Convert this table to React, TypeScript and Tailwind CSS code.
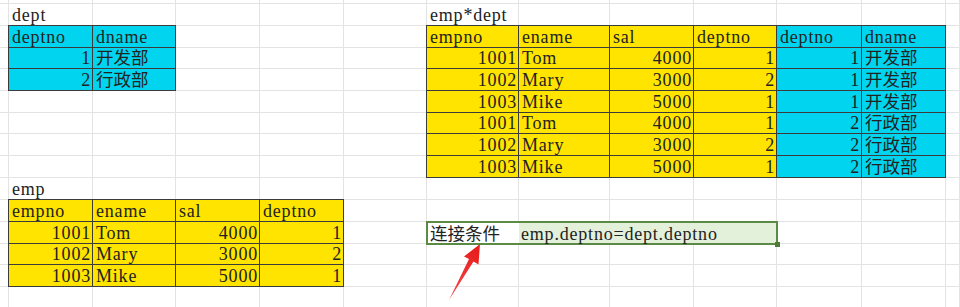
import React from "react";

type Fill = "y" | "c";
type Cell = { text: string; fill?: Fill; right?: boolean };

// sheet coordinates: row 0 is y 4-26, col 0 is x 9-93
const cells = new Map<string, Cell>();
const put = (r: number, c: number, cell: Cell) => cells.set(`${r},${c}`, cell);

const putTable = (r0: number, c0: number, rows: (string | number)[][], fills: Fill[]) => {
  rows.forEach((row, i) =>
    row.forEach((v, j) =>
      put(r0 + i, c0 + j, {
        text: String(v),
        fill: fills[j],
        right: i > 0 && typeof v === "number",
      })
    )
  );
};

put(0, 0, { text: "dept" });
putTable(1, 0, [["deptno", "dname"], [1, "开发部"], [2, "行政部"]], ["c", "c"]);

put(0, 5, { text: "emp*dept" });
putTable(
  1,
  5,
  [
    ["empno", "ename", "sal", "deptno", "deptno", "dname"],
    [1001, "Tom", 4000, 1, 1, "开发部"],
    [1002, "Mary", 3000, 2, 1, "开发部"],
    [1003, "Mike", 5000, 1, 1, "开发部"],
    [1001, "Tom", 4000, 1, 2, "行政部"],
    [1002, "Mary", 3000, 2, 2, "行政部"],
    [1003, "Mike", 5000, 1, 2, "行政部"],
  ],
  ["y", "y", "y", "y", "c", "c"]
);

put(8, 0, { text: "emp" });
putTable(
  9,
  0,
  [
    ["empno", "ename", "sal", "deptno"],
    [1001, "Tom", 4000, 1],
    [1002, "Mary", 3000, 2],
    [1003, "Mike", 5000, 1],
  ],
  ["y", "y", "y", "y"]
);

const isCjk = (s: string) => /[\u4e00-\u9fff]/.test(s);

function Text({ value }: { value: string }) {
  if (isCjk(value)) return <span className="text-[17.5px] tracking-normal">{value}</span>;
  return <span>{value}</span>;
}

function SheetCell({ cell }: { cell?: Cell }) {
  if (!cell) return <div className="border-r border-b border-[#e3e3e3]" />;
  const fill =
    cell.fill === "y"
      ? "-ml-px -mt-px border border-[#3b3b3b] bg-[#ffe400]"
      : cell.fill === "c"
      ? "-ml-px -mt-px border border-[#3b3b3b] bg-[#00d4ee]"
      : "border-r border-b border-[#e3e3e3]";
  return (
    <div
      className={`flex items-end whitespace-nowrap pb-[3px] ${fill} ${
        cell.right ? "justify-end pr-[1px]" : "pl-[3px]"
      }`}
    >
      <Text value={cell.text} />
    </div>
  );
}

function Condition() {
  return (
    <div className="relative col-span-4 -m-px flex border-2 border-[#5a8a43] whitespace-nowrap">
      <div className="flex w-[91px] items-end bg-white pb-[2px] pl-[2px]">
        <Text value="连接条件" />
      </div>
      <div className="flex flex-1 items-end bg-[#e3f0da] pb-[2px] pl-[2px]">emp.deptno=dept.deptno</div>
      <div className="absolute -right-[4px] -bottom-[4px] h-[5px] w-[5px] bg-[#4c7d36]" />
    </div>
  );
}

export default function App() {
  const grid: React.ReactNode[] = [];
  for (let gr = 0; gr < 15; gr++) {
    for (let gc = 0; gc < 13; gc++) {
      const r = gr - 1;
      const c = gc - 1;
      if (r === 10 && c >= 6 && c <= 8) continue;
      if (r === 10 && c === 5) {
        grid.push(<Condition key={`${gr}-${gc}`} />);
        continue;
      }
      grid.push(<SheetCell key={`${gr}-${gc}`} cell={cells.get(`${r},${c}`)} />);
    }
  }

  return (
    <div className="relative h-[307px] w-[960px] overflow-hidden bg-white font-['Liberation_Serif','Noto_Sans_CJK_SC',serif] text-[18px] leading-[14px] tracking-[0.8px] text-[#222]">
      <div className="grid grid-cols-[9px_84px_83px_84px_84px_83px_92px_91px_84px_83px_85px_84px_14px] grid-rows-[4px_22px_22px_21px_22px_22px_21px_22px_22px_22px_22px_22px_21px_22px_22px]">
        {grid}
      </div>

      {/* red arrow pointing at the condition cell */}
      <svg className="pointer-events-none absolute left-0 top-0" width="960" height="307" viewBox="0 0 960 307">
        <defs>
          <linearGradient id="arrow" x1="0" y1="1" x2="0.4" y2="0">
            <stop offset="0" stopColor="#f25050" />
            <stop offset="1" stopColor="#e82020" />
          </linearGradient>
        </defs>
        <polygon
          points="480,244 478.5,264.5 473.5,261.5 449,300 469,259 464,256.5"
          fill="url(#arrow)"
        />
      </svg>
    </div>
  );
}
